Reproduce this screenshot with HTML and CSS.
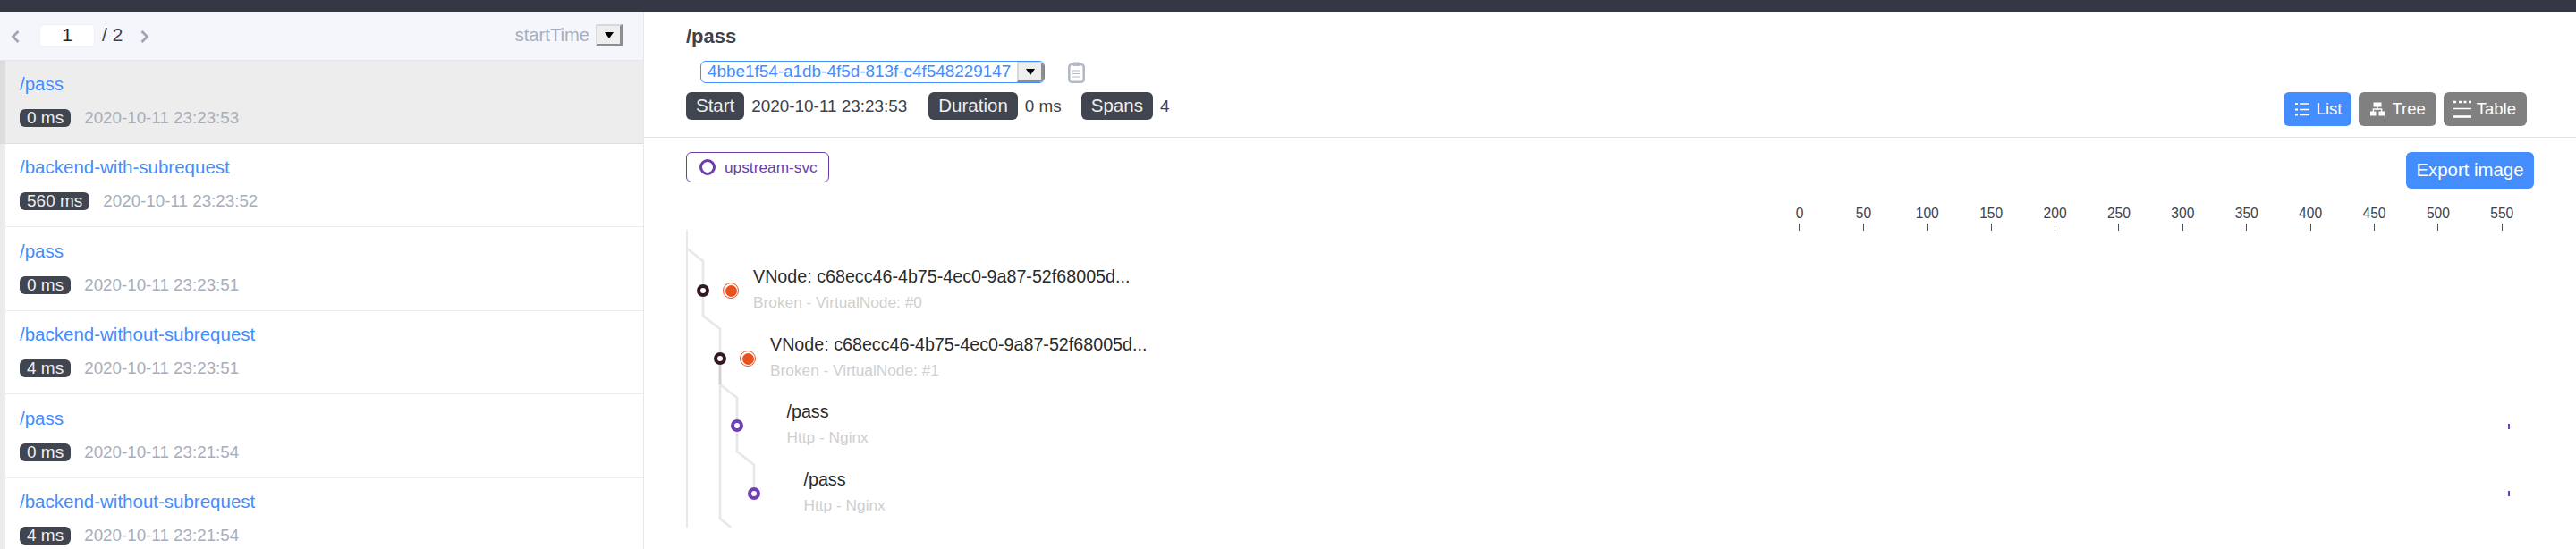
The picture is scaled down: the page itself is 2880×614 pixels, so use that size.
FILE: index.html
```html
<!DOCTYPE html>
<html lang="en">
<head>
<meta charset="utf-8">
<title>Trace</title>
<link rel="stylesheet" href="styles.css">
</head>
<body>
<div class="topbar"></div>
<div class="main">
  <aside class="sidebar">
    <div class="pager">
      <svg class="chev" width="10" height="14" viewBox="0 0 10 14"><path d="M8.500 1 2.500 7l6 6" fill="none" stroke="#a0a6b2" stroke-width="2.800"/></svg>
      <span class="page-input">1</span>
      <span class="page-total">/ 2</span>
      <svg class="chev next" width="10" height="14" viewBox="0 0 10 14"><path d="M1.500 1l6 6-6 6" fill="none" stroke="#a0a6b2" stroke-width="2.800"/></svg>
      <span class="sort">startTime</span>
      <span class="select-btn"><i class="arrow"></i></span>
    </div>
    <div class="item active">
      <div class="item-title">/pass</div>
      <div class="item-meta"><span class="ms">0 ms</span><span class="time">2020-10-11 23:23:53</span></div>
    </div>
    <div class="item">
      <div class="item-title">/backend-with-subrequest</div>
      <div class="item-meta"><span class="ms">560 ms</span><span class="time">2020-10-11 23:23:52</span></div>
    </div>
    <div class="item">
      <div class="item-title">/pass</div>
      <div class="item-meta"><span class="ms">0 ms</span><span class="time">2020-10-11 23:23:51</span></div>
    </div>
    <div class="item">
      <div class="item-title">/backend-without-subrequest</div>
      <div class="item-meta"><span class="ms">4 ms</span><span class="time">2020-10-11 23:23:51</span></div>
    </div>
    <div class="item">
      <div class="item-title">/pass</div>
      <div class="item-meta"><span class="ms">0 ms</span><span class="time">2020-10-11 23:21:54</span></div>
    </div>
    <div class="item">
      <div class="item-title">/backend-without-subrequest</div>
      <div class="item-meta"><span class="ms">4 ms</span><span class="time">2020-10-11 23:21:54</span></div>
    </div>
  </aside>
  <section class="detail">
    <header class="head">
      <div class="head-left">
        <h1 class="title">/pass</h1>
        <div class="trace-row">
          <span class="trace-select"><span class="trace-id">4bbe1f54-a1db-4f5d-813f-c4f548229147</span><span class="select-btn small"><i class="arrow"></i></span></span>
          <svg class="clip" width="19" height="24" viewBox="0 0 19 24"><rect x="1.300" y="3" width="16.400" height="19.700" rx="3" fill="none" stroke="#b3bac6" stroke-width="2.600"/><rect x="5.500" y="0.500" width="8" height="4.500" rx="1" fill="#b3bac6"/><path d="M5 10h9M5 13.500h9M5 17h9" stroke="#b3bac6" stroke-width="1.200"/></svg>
        </div>
        <div class="stats">
          <span class="tag">Start</span><span class="val spaced">2020-10-11 23:23:53</span>
          <span class="tag">Duration</span><span class="val spaced short">0 ms</span>
          <span class="tag">Spans</span><span class="val">4</span>
        </div>
      </div>
      <div class="views">
        <button class="view on">
          <svg width="16" height="16" viewBox="0 0 16 16"><path d="M5 2h11M5 8.500h11M5 14.500h11" stroke="#fff" stroke-width="1.400"/><path d="M0 2h3M0 8.500h3M0 14.500h3" stroke="#fff" stroke-width="1.800"/></svg>List</button>
        <button class="view">
          <svg width="16" height="16" viewBox="0 0 16 16"><path d="M3.500 0.500h9v5h-9zM0 10.500h6.500v5H0zM9.500 10.500H16v5H9.500z" fill="#fff"/><path d="M8 5v3M3.300 11V8h9.400v3" fill="none" stroke="#fff" stroke-width="1.300"/></svg>Tree</button>
        <button class="view tight">
          <svg width="20" height="20" viewBox="0 0 20 20"><path d="M0 2h3M6 2h3M11.500 2h3M17 2h3" stroke="#fff" stroke-width="2.400"/><path d="M0 9.500h20" stroke="#fff" stroke-width="1.500"/><path d="M0 18.500h20" stroke="#fff" stroke-width="2.600"/></svg>Table</button>
      </div>
    </header>
    <div class="legend-row">
      <span class="legend"><i class="ring"></i>upstream-svc</span>
      <button class="export">Export image</button>
    </div>
    <div class="chart">
      <div class="axis">
        <span class="tick">0</span><span class="tick">50</span><span class="tick">100</span><span class="tick">150</span><span class="tick">200</span><span class="tick">250</span><span class="tick">300</span><span class="tick">350</span><span class="tick">400</span><span class="tick">450</span><span class="tick">500</span><span class="tick">550</span>
      </div>
      <svg class="links" width="120" height="340" viewBox="0 0 120 340">
        <path d="M8 7V340" stroke="#dedede" stroke-width="1.300" fill="none"/>
        <path d="M8 28L26 42V103L45 118V330L57.500 340" stroke="#e8e8e8" stroke-width="2.700" fill="none"/>
        <path d="M45 180L64 195V255L83 270V300" stroke="#e8e8e8" stroke-width="2.700" fill="none"/>
        <path d="M45 157V180" stroke="#d2d2d2" stroke-width="2.700" fill="none"/>
      </svg>
      <div class="nodes">
        <div class="node">
          <i class="dot dark"></i><i class="badge broken"></i>
          <div class="node-text"><div class="node-name">VNode: c68ecc46-4b75-4ec0-9a87-52f68005d...</div><div class="node-sub">Broken - VirtualNode: #0</div></div>
        </div>
        <div class="node d1">
          <i class="dot dark"></i><i class="badge broken"></i>
          <div class="node-text"><div class="node-name">VNode: c68ecc46-4b75-4ec0-9a87-52f68005d...</div><div class="node-sub">Broken - VirtualNode: #1</div></div>
        </div>
        <div class="node d2">
          <i class="dot purple"></i><i class="badge"></i>
          <div class="node-text"><div class="node-name">/pass</div><div class="node-sub">Http - Nginx</div></div>
          <i class="bar"></i>
        </div>
        <div class="node d3">
          <i class="dot purple"></i><i class="badge"></i>
          <div class="node-text"><div class="node-name">/pass</div><div class="node-sub">Http - Nginx</div></div>
          <i class="bar"></i>
        </div>
      </div>
    </div>
  </section>
</div>
</body>
</html>
```

FILE: styles.css
```css
* { box-sizing: border-box; }
html, body { margin: 0; height: 614px; overflow: hidden; background: #fff; }
body { font-family: "Liberation Sans", Arial, sans-serif; color: #3d424d; }
.topbar { height: 13px; background: #333844; }
.main { display: flex; height: 601px; overflow: hidden; }

.sidebar { width: 720px; flex: none; height: 601px; border-right: 1.500px solid #e6e8ee; overflow: hidden; }
.pager { height: 54.600px; display: flex; align-items: center; padding: 0 23px 0 12px; background: #f4f6fb; border-bottom: 1px solid #e6e6e6; }
.chev { flex: none; margin-top: 2px; }
.page-input { width: 62px; height: 26px; margin-left: 22px; background: #fff; border: 1px solid #eef0f4; border-radius: 5px; text-align: center; font-size: 21px; line-height: 22px; color: #222; }
.page-total { margin-left: 8px; margin-right: 20px; font-size: 21px; line-height: 24px; margin-top: -2px; color: #3d424d; }
.sort { margin-left: auto; font-size: 20.200px; line-height: 24px; color: #a7aebb; margin-top: -2px; margin-right: 7px; }
.select-btn { flex: none; width: 30px; height: 25px; display: flex; align-items: center; justify-content: center; background: #eee; border-style: solid; border-width: 2px 3px 3px 2px; border-color: #d8d8d8 #8e8e8e #8e8e8e #d8d8d8; }
.arrow { width: 0; height: 0; border-left: 5px solid transparent; border-right: 5px solid transparent; border-top: 7px solid #000; }

.item { height: 93.400px; padding: 13.500px 0 0 16px; border-left: 6px solid #ebebeb; border-bottom: 1px solid #ededed; }
.item.active { background: #ededed; border-left-color: #dcdcdc; border-bottom-color: #dfdfdf; }
.item-title { font-size: 20.500px; line-height: 26px; color: #448dfe; }
.item-meta { display: flex; align-items: center; margin-top: 15px; }
.ms { height: 20px; padding: 0 8px; border-radius: 6px; background: #40454f; color: #eee; font-size: 19px; line-height: 19px; }
.time { margin-left: 15px; font-size: 18.800px; line-height: 20px; color: #a7aebb; }

.detail { flex: 1; min-width: 0; }
.head { height: 141px; border-bottom: 1px solid #e4e4e4; padding-left: 47px; display: flex; }
.head-left { flex: 1; }
.title { margin: 15px 0 0; font-size: 22px; line-height: 26px; font-weight: 700; color: #3d424d; }
.trace-row { display: flex; align-items: center; margin: 14px 0 0 16px; height: 25px; }
.trace-select { display: flex; align-items: stretch; width: 385px; height: 25px; border: 1px solid #448dfe; border-radius: 6px; overflow: hidden; }
.trace-id { flex: 1; padding-left: 7px; font-size: 18.900px; line-height: 22px; color: #448dfe; white-space: nowrap; overflow: hidden; }
.select-btn.small { height: 23px; }
.clip { margin-left: 26px; }
.stats { display: flex; align-items: center; margin-top: 10px; }
.tag { height: 31px; padding: 0 11px; border-radius: 6px; background: #40454f; color: #eee; font-size: 20.500px; line-height: 29px; }
.val { font-size: 18.900px; line-height: 28px; color: #3d424d; margin-left: 8px; }
.val.spaced { margin-right: 24px; }
.val.spaced.short { margin-right: 22px; }

.views { display: flex; gap: 8px; align-self: flex-end; margin: 0 55px 12px 0; }
.view { display: flex; align-items: center; gap: 8px; height: 38px; padding: 0 12px 0 13px; border: 0; border-radius: 6px; background: #808080; color: #fff; font: 18.500px "Liberation Sans", Arial, sans-serif; }
.view.on { background: #448dfe; padding-right: 11px; }
.view.tight { padding-left: 11px; gap: 6px; }

.legend-row { display: flex; justify-content: space-between; align-items: flex-start; padding: 16px 47px 0; height: 75px; }
.legend { display: flex; align-items: center; width: 160px; height: 34px; border: 1px solid #6a3fa8; border-radius: 6px; padding-left: 14px; font-size: 17.300px; color: #6a3fa8; }
.ring { flex: none; width: 18px; height: 18px; margin-right: 10px; border: 3.500px solid #6a3fa8; border-radius: 50%; }
.export { height: 41px; width: 143px; border: 0; border-radius: 6px; background: #448dfe; color: #fff; font: 20.400px "Liberation Sans", Arial, sans-serif; }

.chart { position: relative; height: 385px; overflow: hidden; }
.axis { display: flex; padding-left: 1256.300px; height: 29px; }
.tick { flex: none; width: 71.400px; font-size: 15.600px; line-height: 20px; text-align: center; color: #3d424d; }
.tick::after { content: ""; display: block; width: 1px; height: 8px; margin: 1px auto 0; background: #4d525c; }
.links { position: absolute; left: 40px; top: 21px; }

.nodes { margin-top: 29.150px; }
.node { position: relative; display: flex; align-items: center; height: 75.700px; padding-left: 59px; }
.d1 { padding-left: 78px; }
.d2 { padding-left: 96.500px; }
.d3 { padding-left: 115.500px; }
.dot { flex: none; width: 14px; height: 14px; border-radius: 50%; border: 4px solid #341a1f; background: #fff; }
.dot.purple { border-color: #6f3fb5; }
.badge { flex: none; width: 18px; height: 18px; margin-left: 15px; }
.badge.broken { border-radius: 50%; border: 1px solid #e8501c; padding: 1.500px; background: #e8501c content-box; }
.node-text { margin: 0 0 4px 16px; white-space: nowrap; }
.node-name { font-size: 19.700px; line-height: 24px; color: #2a2a2a; }
.node-sub { margin-top: 6px; font-size: 17.300px; line-height: 22px; color: #cfcfcf; }
.bar { position: absolute; left: 2084px; top: 35px; width: 2px; height: 6px; background: #6f3fb5; }
```
